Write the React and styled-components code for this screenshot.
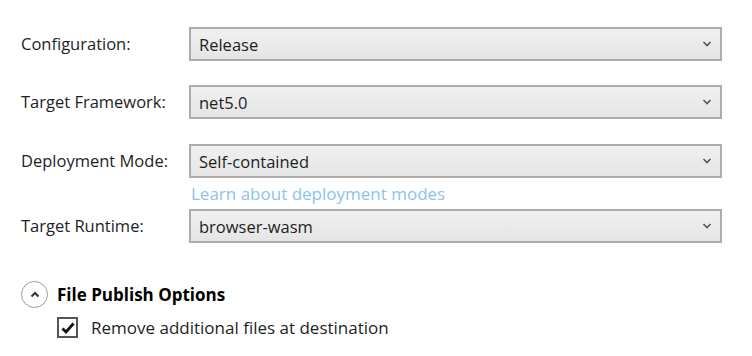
import styled, { createGlobalStyle } from "styled-components";

const GlobalStyle = createGlobalStyle`
  body {
    margin: 0;
    background: #ffffff;
    font-family: "Open Sans", "Noto Sans", sans-serif;
    color: #1e1e1e;
  }
`;

const Page = styled.div`
  width: 752px;
  height: 356px;
  padding: 27px 0 0 21px;
  box-sizing: border-box;
  overflow: hidden;
`;

const Row = styled.div`
  display: flex;
  align-items: flex-start;
  margin-bottom: ${({ $gap }) => $gap}px;
`;

const Label = styled.div`
  width: 168px;
  line-height: 34px;
  font-size: 16.5px;
`;

const Field = styled.div`
  display: flex;
  flex-direction: column;
`;

const Select = styled.div`
  width: 533px;
  height: 34px;
  box-sizing: border-box;
  border: 2px solid #acacac;
  background: linear-gradient(#f0f0f0, #e5e5e5);
  display: flex;
  align-items: center;
  justify-content: space-between;
  padding: 0 8px 0 8px;
  font-size: 16.5px;
`;

const Chevron = () => (
  <svg width="10" height="6" viewBox="0 0 10 6">
    <path d="M1.5 1 L5 4.5 L8.5 1" fill="none" stroke="#555" strokeWidth="1.6" />
  </svg>
);

const Link = styled.a`
  display: block;
  height: 31px;
  line-height: 32px;
  padding-left: 2px;
  font-size: 17px;
  color: #8cc3ee;
  text-decoration: none;
`;

const Section = styled.div`
  margin-top: 37px;
  display: flex;
  align-items: center;
  gap: 9px;
  height: 28px;
`;

const Toggle = styled.span`
  width: 27px;
  height: 27px;
  box-sizing: border-box;
  border: 1px solid #9a9a9a;
  border-radius: 50%;
  display: flex;
  align-items: center;
  justify-content: center;
`;

const Title = styled.span`
  font-weight: 700;
  font-size: 17px;
  color: #000;
`;

const CheckRow = styled.label`
  margin-top: 8px;
  margin-left: 36px;
  display: flex;
  align-items: center;
  gap: 13px;
  font-size: 17px;
`;

const Box = styled.span`
  width: 21px;
  height: 21px;
  box-sizing: border-box;
  border: 2px solid #555;
  background: #fff;
  display: flex;
  align-items: center;
  justify-content: center;
`;

const rows = [
  { label: "Configuration:", value: "Release", gap: 24 },
  { label: "Target Framework:", value: "net5.0", gap: 25 },
  { label: "Deployment Mode:", value: "Self-contained", gap: 0, link: "Learn about deployment modes" },
  { label: "Target Runtime:", value: "browser-wasm", gap: 0 },
];

export default function App() {
  return (
    <Page>
      <GlobalStyle />
      {rows.map((r) => (
        <Row key={r.label} $gap={r.gap}>
          <Label>{r.label}</Label>
          <Field>
            <Select>
              <span>{r.value}</span>
              <Chevron />
            </Select>
            {r.link && <Link href="#">{r.link}</Link>}
          </Field>
        </Row>
      ))}
      <Section>
        <Toggle>
          <svg width="10" height="7" viewBox="0 0 10 7">
            <path d="M1.5 5.5 L5 2 L8.5 5.5" fill="none" stroke="#333" strokeWidth="2" />
          </svg>
        </Toggle>
        <Title>File Publish Options</Title>
      </Section>
      <CheckRow>
        <Box>
          <svg width="14" height="12" viewBox="0 0 14 12">
            <path d="M1.5 6.5 L5 10 L12.5 1.5" fill="none" stroke="#111" strokeWidth="2.8" />
          </svg>
        </Box>
        Remove additional files at destination
      </CheckRow>
    </Page>
  );
}
